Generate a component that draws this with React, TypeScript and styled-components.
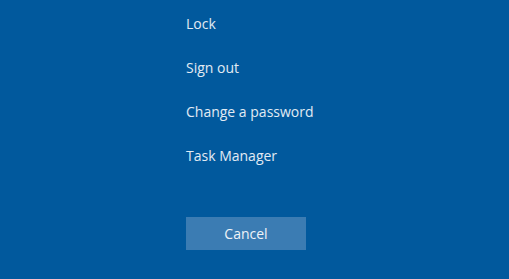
import React from "react";
import styled, { createGlobalStyle } from "styled-components";

const Global = createGlobalStyle`
  html, body { margin: 0; padding: 0; background: #01599d; }
  * { box-sizing: border-box; }
`;

const Screen = styled.div`
  width: 509px;
  height: 279px;
  background: #01599d;
  font-family: "Open Sans", "Noto Sans", sans-serif;
  color: #e2ebf4;
  display: flex;
  flex-direction: column;
  padding: 1px 0 0 186px;
`;

const Menu = styled.div`
  display: flex;
  flex-direction: column;
`;

const Item = styled.div`
  height: 44px;
  display: flex;
  align-items: center;
  font-size: 14px;
  letter-spacing: 0;
`;

const CancelButton = styled.button`
  margin-top: 40px;
  width: 120px;
  height: 33px;
  border: none;
  background: #3b7cb3;
  color: #eef3f8;
  font-family: "Open Sans", "Noto Sans", sans-serif;
  font-size: 14px;
  padding: 0;
`;

export default function App() {
  return (
    <>
      <Global />
      <Screen>
        <Menu>
          <Item>Lock</Item>
          <Item>Sign out</Item>
          <Item>Change a password</Item>
          <Item>Task Manager</Item>
        </Menu>
        <CancelButton>Cancel</CancelButton>
      </Screen>
    </>
  );
}
